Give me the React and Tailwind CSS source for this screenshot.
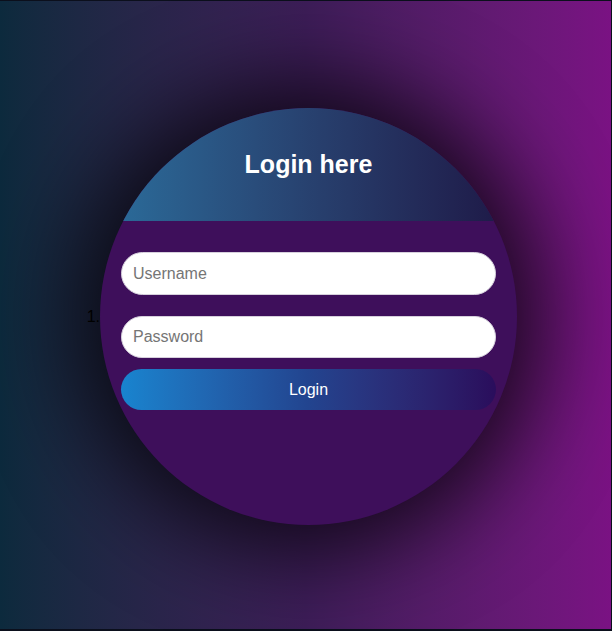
import { useState } from 'react'

function LoginCircle() {
  const [user, setUser] = useState('')
  const [pass, setPass] = useState('')

  return (
    <div className="relative z-10 w-[417px] h-[417px] shrink-0 rounded-full overflow-hidden bg-[#3e0f5b] shadow-[0_0_90px_25px_rgba(0,0,0,0.75)]">
      <div className="h-[113px] flex items-center justify-center bg-gradient-to-r from-[#2a6e9c] to-[#1d1745]">
        <h2 className="text-white text-[25px] font-bold pt-[1px]">Login here</h2>
      </div>
      <div className="px-[21px] pt-[31px] flex flex-col">
        <input
          value={user}
          onChange={e => setUser(e.target.value)}
          placeholder="Username"
          className="h-[43px] w-full rounded-full bg-white border border-[#d6d0dc] px-[11px] text-base text-black placeholder:text-[#757575] outline-none"
        />
        <input
          type="password"
          value={pass}
          onChange={e => setPass(e.target.value)}
          placeholder="Password"
          className="mt-[21px] h-[42px] w-full rounded-full bg-white border border-[#d6d0dc] px-[11px] text-base text-black placeholder:text-[#757575] outline-none"
        />
        <button className="mt-[11px] h-[41px] w-full rounded-full bg-gradient-to-r from-[#1884cf] via-[#22448f] to-[#2a0d5c] text-white text-base">
          Login
        </button>
      </div>
    </div>
  )
}

export default function App() {
  return (
    <div className="w-[612px] h-[631px] overflow-hidden bg-[#0b0f1c] font-['Liberation_Sans',Arial,sans-serif]">
      <div className="w-[611px] h-[628px] mt-[1px] bg-gradient-to-r from-[#0c2a3d] via-[#3d1d58] to-[#7a1283] flex items-start">
        <div className="flex items-center mt-[107px]">
          <span className="w-[100px] text-right text-black text-base mr-[0px]">1.</span>
          <LoginCircle />
        </div>
      </div>
    </div>
  )
}
